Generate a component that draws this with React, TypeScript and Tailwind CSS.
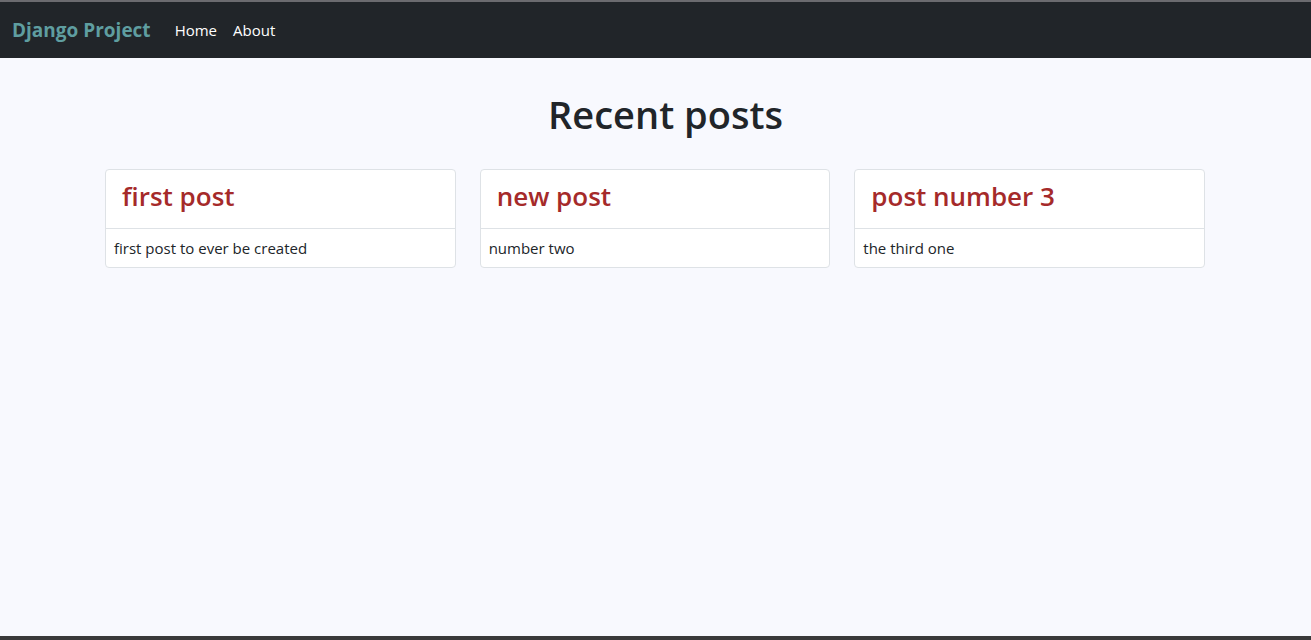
const posts = [
  { title: "first post", body: "first post to ever be created" },
  { title: "new post", body: "number two" },
  { title: "post number 3", body: "the third one" },
];

export default function App() {
  return (
    <div className="flex h-[640px] flex-col bg-[#f8f9fe] font-['Open_Sans',sans-serif] text-[#212529]">
      <div className="h-[2px] bg-[#6b6b6f]" />
      <nav className="flex h-[56px] items-center bg-[#212529] px-3">
        <a className="mr-6 text-[19px] font-bold text-[#5f9ea0]">Django Project</a>
        <a className="mr-4 text-[15px] text-white">Home</a>
        <a className="text-[15px] text-white">About</a>
      </nav>
      <main className="flex-1">
        <h1 className="mt-[31px] mb-[30px] pl-5 text-center text-[38px] font-semibold leading-[50px]">Recent posts</h1>
        <div className="mx-auto grid w-[1101px] grid-cols-3 gap-6 pr-px">
          {posts.map((p) => (
            <div key={p.title} className="rounded border border-[#dee2e6] bg-white">
              <div className="flex h-[59px] items-center border-b border-[#dee2e6] px-4 pb-[6px]">
                <h2 className="text-[26px] font-semibold text-[#a52a2a]">{p.title}</h2>
              </div>
              <p className="px-2 pt-[8px] pb-[7px] text-[15px]">{p.body}</p>
            </div>
          ))}
        </div>
      </main>
      <div className="h-[4px] bg-[#3a3a3a]" />
    </div>
  );
}
